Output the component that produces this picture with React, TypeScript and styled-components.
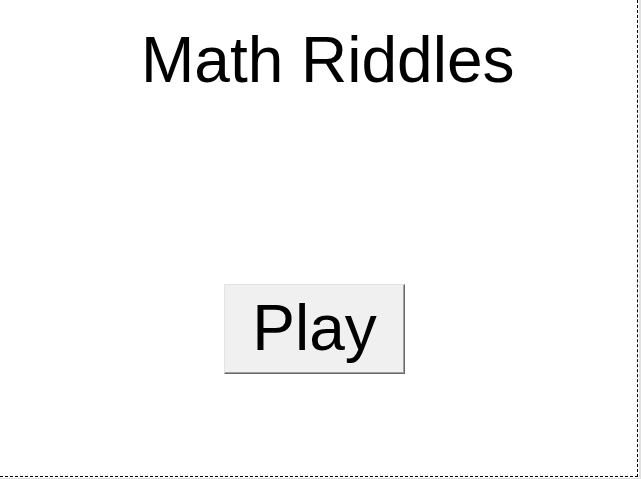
import React from 'react';
import styled, { createGlobalStyle } from 'styled-components';

const GlobalStyle = createGlobalStyle`
  html, body {
    margin: 0;
    padding: 0;
    background: #e1e1e1;
  }
  body {
    font-family: "Liberation Sans", Arial, sans-serif;
  }
`;

const App = () => {
  return (
    <>
      <GlobalStyle />
      <Window>
        <Stage>
          <Title>Math Riddles</Title>
          <PlayButton type="button">Play</PlayButton>
        </Stage>
      </Window>
    </>
  );
};

export default App;

const Window = styled.div`
  width: 639px;
  height: 478px;
  background: #ffffff;
`;

const Stage = styled.div`
  box-sizing: border-box;
  width: 638px;
  height: 477px;
  border-right: 1px dashed #000;
  border-bottom: 1px dashed #000;
  display: flex;
  flex-direction: column;
  align-items: flex-start;
`;

const Title = styled.h1`
  margin: 28px 0 0 141px;
  font-family: "Liberation Sans", Arial, sans-serif;
  font-weight: 400;
  font-size: 64px;
  line-height: 64px;
  color: #000;
  white-space: nowrap;
`;

const PlayButton = styled.button`
  box-sizing: border-box;
  margin: 192px 0 0 224px;
  width: 181px;
  height: 90px;
  padding: 11px 0 13px;
  font-family: "Liberation Sans", Arial, sans-serif;
  font-size: 64px;
  line-height: 64px;
  color: #000;
  background: #f0f0f0;
  border-style: solid;
  border-width: 1px;
  border-color: #e3e3e3 #696969 #696969 #e3e3e3;
  box-shadow: inset -1px -1px 0 #a0a0a0;
  border-radius: 0;
  cursor: pointer;
`;
